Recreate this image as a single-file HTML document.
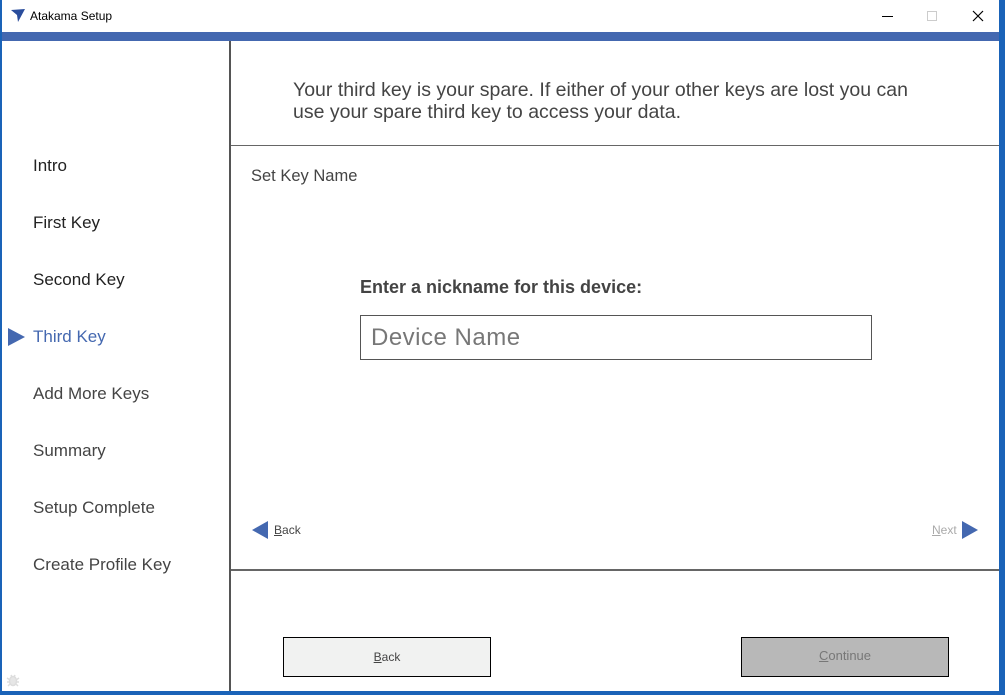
<!DOCTYPE html>
<html><head><meta charset="utf-8"><style>
*{margin:0;padding:0;box-sizing:border-box}
body{width:1005px;height:695px;background:#1a63b8;position:relative;overflow:hidden;font-family:"Liberation Sans",sans-serif}
.win{position:absolute;left:2px;top:0;width:997px;height:691px;background:#fff}
.abs{position:absolute}
.nav{position:absolute;left:31px;font-size:17px;color:#222}
</style></head><body>
<div class="abs" style="left:0;top:0;width:1005px;height:2px;background:#1a63b8"></div>
<div class="win">
  <svg class="abs" style="left:9px;top:9px" width="14" height="14" viewBox="0 0 14 14"><path d="M0 1 L14 0 L7 13 L6 6 Z" fill="#2a4d9c"/></svg>
  <div class="abs" style="left:28px;top:9px;font-size:12px;color:#000">Atakama Setup</div>
  <div class="abs" style="left:880px;top:16px;width:11px;height:1px;background:#000"></div>
  <div class="abs" style="left:925px;top:11px;width:10px;height:10px;border:1px solid #ccc"></div>
  <svg class="abs" style="left:970px;top:10px" width="12" height="12"><path d="M1 1L11 11M11 1L1 11" stroke="#000" stroke-width="1.2"/></svg>
  <div class="abs" style="left:0;top:32px;width:997px;height:9px;background:#4468b0"></div>
  <div class="abs" style="left:227px;top:41px;width:2px;height:650px;background:#555"></div>
  <div class="abs" style="left:229px;top:145px;width:768px;height:1px;background:#666"></div>
  <div class="abs" style="left:229px;top:569px;width:768px;height:2px;background:#666"></div>
  <div class="abs" style="left:291px;top:79px;font-size:19.5px;color:#444;line-height:22px;white-space:nowrap">Your third key is your spare. If either of your other keys are lost you can<br>use your spare third key to access your data.</div>
  <div class="abs" style="left:249px;top:167px;font-size:16.5px;color:#444">Set Key Name</div>
  <div class="abs" style="left:358px;top:277px;font-size:18px;color:#444;font-weight:bold">Enter a nickname for this device:</div>
  <div class="abs" style="left:358px;top:315px;width:512px;height:45px;border:1px solid #555;font-size:24px;color:#777;padding:8px 10px;letter-spacing:0.5px">Device Name</div>
  <svg class="abs" style="left:250px;top:521px" width="16" height="18"><path d="M16 0V18L0 9Z" fill="#4468b0"/></svg>
  <div class="abs" style="left:272px;top:523px;font-size:12px;color:#444"><u>B</u>ack</div>
  <div class="abs" style="left:930px;top:523px;font-size:12px;color:#aaa"><u>N</u>ext</div>
  <svg class="abs" style="left:960px;top:521px" width="16" height="18"><path d="M0 0V18L16 9Z" fill="#4468b0"/></svg>
  <div class="abs" style="left:281px;top:637px;width:208px;height:40px;border:1px solid #000;background:#f1f2f1;text-align:center;line-height:38px;font-size:12px;color:#444"><u>B</u>ack</div>
  <div class="abs" style="left:739px;top:637px;width:208px;height:40px;border:1px solid #000;background:#b8b8b8;text-align:center;line-height:36px;font-size:13px;color:#777"><u>C</u>ontinue</div>
  <div class="nav" style="top:156px">Intro</div>
  <div class="nav" style="top:213px">First Key</div>
  <div class="nav" style="top:270px">Second Key</div>
  <svg class="abs" style="left:6px;top:328px" width="18" height="18"><path d="M0 0V18L17 9Z" fill="#4468b0"/></svg>
  <div class="nav" style="top:327px;color:#4468b0">Third Key</div>
  <div class="nav" style="top:384px;color:#444">Add More Keys</div>
  <div class="nav" style="top:441px;color:#444">Summary</div>
  <div class="nav" style="top:498px;color:#444">Setup Complete</div>
  <div class="nav" style="top:555px;color:#444">Create Profile Key</div>
  <svg class="abs" style="left:4px;top:673px" width="14" height="14"><g stroke="#ddd" stroke-width="1.5" fill="#e6e6e6"><ellipse cx="7" cy="8" rx="3.5" ry="4.5"/><path d="M1 5L4 7M13 5L10 7M1 9H3.5M13 9H10.5M2 13L4 11M12 13L10 11M5 2L6 4M9 2L8 4"/></g></svg>
</div>
</body></html>
